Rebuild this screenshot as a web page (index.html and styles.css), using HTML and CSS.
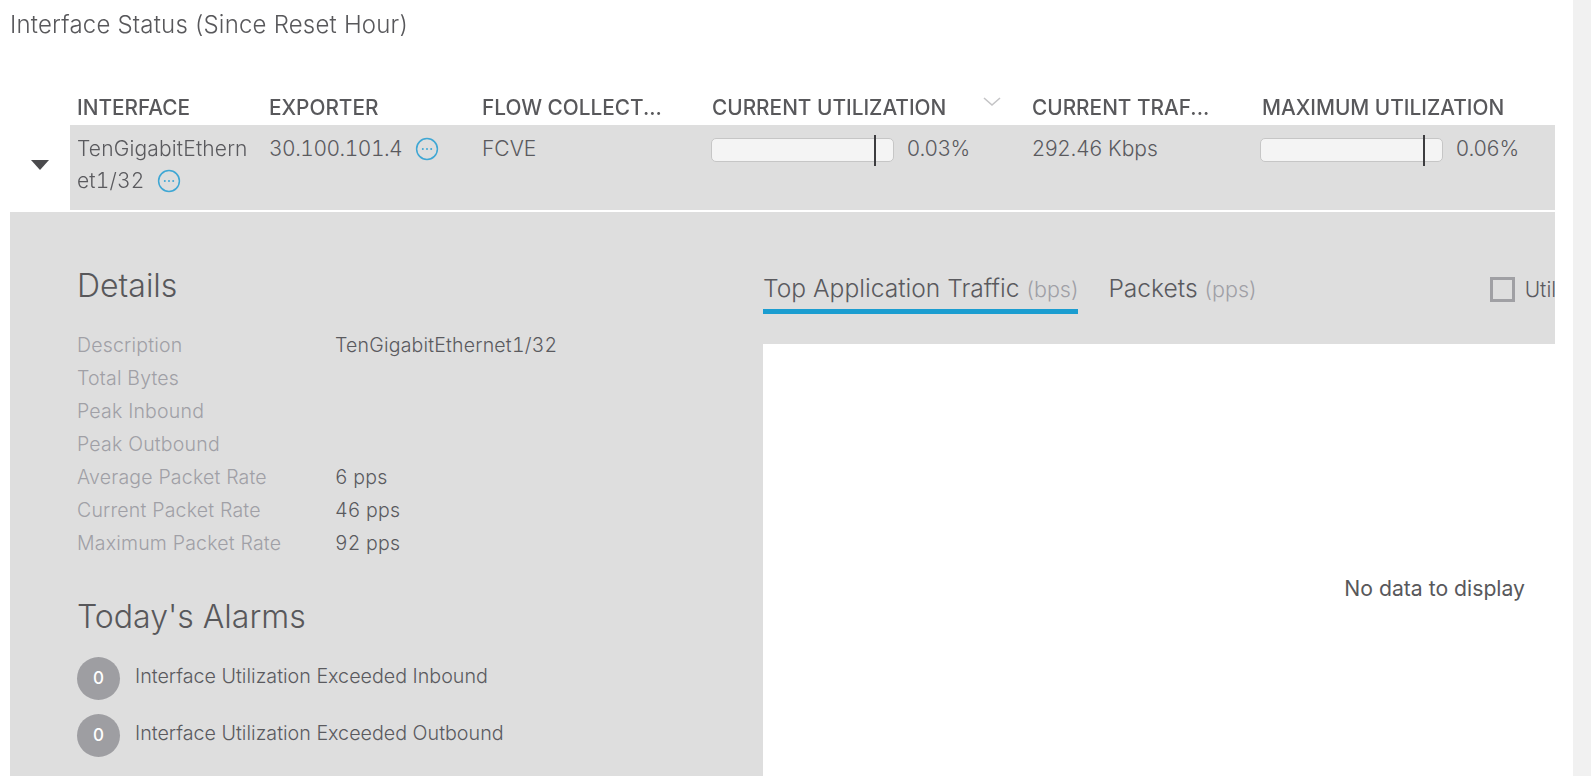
FILE: index.html
```html
<!DOCTYPE html>
<html lang="en">
<head>
<meta charset="utf-8">
<title>Interface Status</title>
<link rel="stylesheet" href="styles.css">
</head>
<body>
<main class="page">
  <h1 class="title">Interface Status (Since Reset Hour)</h1>
  <div class="table">
    <div class="row head">
      <div class="arrow-cell"></div>
      <div class="cell c1">INTERFACE</div>
      <div class="cell c2">EXPORTER</div>
      <div class="cell c3">FLOW COLLECT...</div>
      <div class="cell c4 sorted">CURRENT UTILIZATION
        <svg class="chev" width="18" height="10" viewBox="0 0 18 10"><path d="M1 1l8 7 8-7" fill="none" stroke="#c4c4c6" stroke-width="1.6"/></svg>
      </div>
      <div class="cell c5">CURRENT TRAF...</div>
      <div class="cell c6">MAXIMUM UTILIZATION</div>
    </div>
    <div class="row body-row">
      <div class="arrow-cell"><span class="caret"></span></div>
      <div class="cell c1 grey"><span class="wrap">TenGigabitEthern<br>et1/32<svg class="dots after" width="24" height="24" viewBox="0 0 24 24"><circle cx="12" cy="12" r="10.4" fill="none" stroke="#3fa7d4" stroke-width="1.5"/><circle cx="7.8" cy="12" r="1" fill="#3fa7d4"/><circle cx="12" cy="12" r="1" fill="#3fa7d4"/><circle cx="16.2" cy="12" r="1" fill="#3fa7d4"/></svg></span></div>
      <div class="cell c2 grey"><span class="ip">30.100.101.4</span><svg class="dots" width="24" height="24" viewBox="0 0 24 24"><circle cx="12" cy="12" r="10.4" fill="none" stroke="#3fa7d4" stroke-width="1.5"/><circle cx="7.8" cy="12" r="1" fill="#3fa7d4"/><circle cx="12" cy="12" r="1" fill="#3fa7d4"/><circle cx="16.2" cy="12" r="1" fill="#3fa7d4"/></svg></div>
      <div class="cell c3 grey">FCVE</div>
      <div class="cell c4 grey meter-cell">
        <div class="meter"><span class="tick"></span></div><span class="pct">0.03%</span>
      </div>
      <div class="cell c5 grey">292.46 Kbps</div>
      <div class="cell c6 grey meter-cell max">
        <div class="meter"><span class="tick"></span></div><span class="pct">0.06%</span>
      </div>
    </div>
  </div>
  <section class="expanded">
    <div class="left">
      <h2 class="h2 details-h">Details</h2>
      <dl class="facts">
        <dt>Description</dt><dd>TenGigabitEthernet1/32</dd>
        <dt>Total Bytes</dt><dd></dd>
        <dt>Peak Inbound</dt><dd></dd>
        <dt>Peak Outbound</dt><dd></dd>
        <dt>Average Packet Rate</dt><dd>6 pps</dd>
        <dt>Current Packet Rate</dt><dd>46 pps</dd>
        <dt>Maximum Packet Rate</dt><dd>92 pps</dd>
      </dl>
      <h2 class="h2 alarms-h">Today's Alarms</h2>
      <ul class="alarms">
        <li><span class="badge">0</span>Interface Utilization Exceeded Inbound</li>
        <li><span class="badge">0</span>Interface Utilization Exceeded Outbound</li>
      </ul>
    </div>
    <div class="right">
      <div class="tabs">
        <div class="tab active">Top Application Traffic <span class="unit">(bps)</span></div>
        <div class="tab">Packets <span class="unit">(pps)</span></div>
        <label class="check"><span class="box"></span>Utilization</label>
      </div>
      <div class="chart"><p class="nodata">No data to display</p></div>
    </div>
  </section>
</main>
<div class="gutter"></div>
</body>
</html>
```
FILE: styles.css
```css
* { box-sizing: border-box; }
html, body { margin: 0; height: 100%; overflow: hidden; background: #fff; }
body {
  display: flex;
  font-family: "Inter", "Liberation Sans", sans-serif;
  color: #5d5d60;
}
.page { width: 1555px; margin-right: 18px; height: 776px; overflow: hidden; filter: blur(0.45px); }
.gutter { width: 18px; background: #f1f1f1; }

.title { margin: 0; padding: 9px 0 0 10px; height: 95px; font-weight: 350; font-size: 24px; letter-spacing: 0.2px; line-height: 32px; color: #58585b; }

.row { display: flex; padding-left: 9px; }
.arrow-cell { width: 61px; flex: none; display: flex; align-items: center; justify-content: center; }
.cell { padding-left: 7px; flex: none; font-size: 21px; white-space: nowrap; }
.c1 { width: 192px; }
.c2 { width: 213px; }
.c3 { width: 230px; }
.c4 { width: 320px; }
.c5 { width: 230px; }
.c6 { width: 300px; }

.head { height: 30px; align-items: flex-start; font-weight: 500; color: #58585b; line-height: 26px; }
.head .cell { font-size: 20.8px; }
.sorted { position: relative; }
.chev { position: absolute; left: 278px; top: 2px; }

.body-row { height: 85px; }
.grey { background: #dedede; padding-top: 8px; line-height: 32px; font-weight: 350; color: #5a5a5e; }
.caret { width: 0; height: 0; border-left: 9.5px solid transparent; border-right: 9.5px solid transparent; border-top: 10px solid #4a4a4d; margin-top: -5px; }
.wrap { display: block; letter-spacing: 0.15px; font-variant-numeric: tabular-nums; }
.ip { font-variant-numeric: tabular-nums; letter-spacing: -0.5px; }
.dots { vertical-align: -5px; margin-left: 13px; }
.dots.after { margin-left: 13px; }

.meter-cell { display: flex; align-items: flex-start; }
.meter { position: relative; width: 183px; height: 24px; margin-top: 5px; margin-left: -1px; background: #f4f4f4; border: 1px solid #c6c6c6; border-radius: 5px; flex: none; }
.max .meter { margin-left: -2px; }
.tick { position: absolute; left: 162px; top: -4px; width: 1.5px; height: 31px; background: #3d3d40; }
.pct { margin-left: 13px; }

.expanded { display: flex; margin-top: 2px; margin-left: 10px; height: 564px; }
.left { width: 753px; flex: none; background: #dedede; padding: 54px 0 0 67px; }
.h2 { margin: 0; font-weight: 350; font-size: 32px; line-height: 40px; color: #58585b; }
.facts { display: grid; grid-template-columns: 258px 1fr; grid-auto-rows: 33px; margin: 23px 0 0; font-size: 19.5px; letter-spacing: 0.2px; font-weight: 350; line-height: 33px; }
.facts dt { color: #a0a0a6; }
.facts dd { margin: 0; color: #5a5a5e; font-variant-numeric: tabular-nums; }
.alarms-h { margin-top: 37px; }
.alarms { list-style: none; margin: 20px 0 0; padding: 0; }
.alarms li { display: flex; align-items: flex-start; height: 57px; font-size: 19.7px; font-weight: 350; line-height: 38px; color: #5a5a5e; }
.badge { width: 43px; height: 43px; flex: none; margin-right: 15px; border-radius: 50%; background: #9e9ea2; color: #fff; font-weight: 500; font-size: 17px; line-height: 43px; text-align: center; }

.right { flex: 1; min-width: 0; background: #fff; display: flex; flex-direction: column; }
.tabs { height: 132px; background: #dedede; display: flex; align-items: flex-start; padding-top: 57px; position: relative; overflow: hidden; }
.tab { font-size: 24.6px; font-weight: 350; line-height: 38px; height: 45px; color: #5a5a5e; white-space: nowrap; margin-right: 30px; }
.tab.active { border-bottom: 5px solid #1b9dd0; }
.unit { color: #a0a0a6; font-size: 21.5px; }
.check { display: flex; align-items: center; margin-left: auto; margin-right: -65px; font-size: 21px; font-weight: 350; height: 40px; color: #5a5a5e; white-space: nowrap; }
.box { width: 25px; height: 25px; border: 3px solid #a0a0a4; margin-right: 10px; flex: none; }
.chart { flex: 1; display: flex; justify-content: flex-end; padding: 228px 30px 0 0; }
.nodata { margin: 0; font-size: 21.2px; font-weight: 400; line-height: 32px; color: #58585b; }
```
